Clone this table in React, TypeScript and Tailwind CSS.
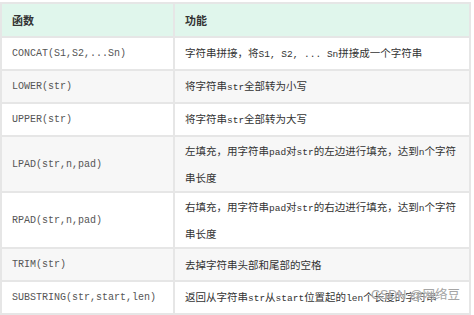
import React from "react";

const monoFont = "font-['Liberation_Mono','DejaVu_Sans_Mono',monospace]";

function M({ children }: { children: React.ReactNode }) {
  return <span className={`${monoFont} text-[9.5px]`}>{children}</span>;
}

export default function App() {
  const rows: { fn: string; desc: React.ReactNode; tall?: boolean }[] = [
    {
      fn: "CONCAT(S1,S2,...Sn)",
      desc: (
        <>
          字符串拼接，将<M>S1, S2, ... Sn</M>拼接成一个字符串
        </>
      ),
    },
    { fn: "LOWER(str)", desc: <>将字符串<M>str</M>全部转为小写</> },
    { fn: "UPPER(str)", desc: <>将字符串<M>str</M>全部转为大写</> },
    {
      fn: "LPAD(str,n,pad)",
      tall: true,
      desc: (
        <>
          左填充，用字符串<M>pad</M>对<M>str</M>的左边进行填充，达到<M>n</M>个字符串长度
        </>
      ),
    },
    {
      fn: "RPAD(str,n,pad)",
      tall: true,
      desc: (
        <>
          右填充，用字符串<M>pad</M>对<M>str</M>的右边进行填充，达到<M>n</M>个字符串长度
        </>
      ),
    },
    { fn: "TRIM(str)", desc: <>去掉字符串头部和尾部的空格</> },
    {
      fn: "SUBSTRING(str,start,len)",
      desc: (
        <>
          返回从字符串<M>str</M>从<M>start</M>位置起的<M>len</M>个长度的字符串
        </>
      ),
    },
  ];

  return (
    <div className="relative w-[474px] h-[315px] bg-white pt-[2px] font-['Noto_Sans_CJK_SC',sans-serif] text-[#333]">
      <table className="w-[471px] border-collapse table-fixed">
        <colgroup>
          <col className="w-[173px]" />
          <col />
        </colgroup>
        <thead>
          <tr className="bg-[#e0f6ec] h-[34px]">
            <th className="border-2 border-[#e6e6e6] px-[10px] text-left text-[11px] font-bold">函数</th>
            <th className="border-2 border-[#e6e6e6] px-[10px] text-left text-[11px] font-bold">功能</th>
          </tr>
        </thead>
        <tbody>
          {rows.map((r, i) => (
            <tr
              key={r.fn}
              className={`${i % 2 === 1 ? "bg-[#f7f7f7]" : "bg-white"} ${r.tall ? "h-[56px]" : "h-[33px]"}`}
            >
              <td className={`border-2 border-[#e6e6e6] px-[10px] text-[#555] text-[10px] ${monoFont}`}>{r.fn}</td>
              <td className="border-2 border-[#e6e6e6] pl-[10px] pr-[4px] text-[10.5px] leading-[25px] text-[#333]">
                {r.desc}
              </td>
            </tr>
          ))}
        </tbody>
      </table>
      <div className="absolute right-[14px] top-[286px] whitespace-nowrap text-[12.5px] text-[#a5a5a5] [text-shadow:0_0_2px_white] font-['Liberation_Sans','Noto_Sans_CJK_SC',sans-serif]">
        CSDN @网络豆
      </div>
    </div>
  );
}
